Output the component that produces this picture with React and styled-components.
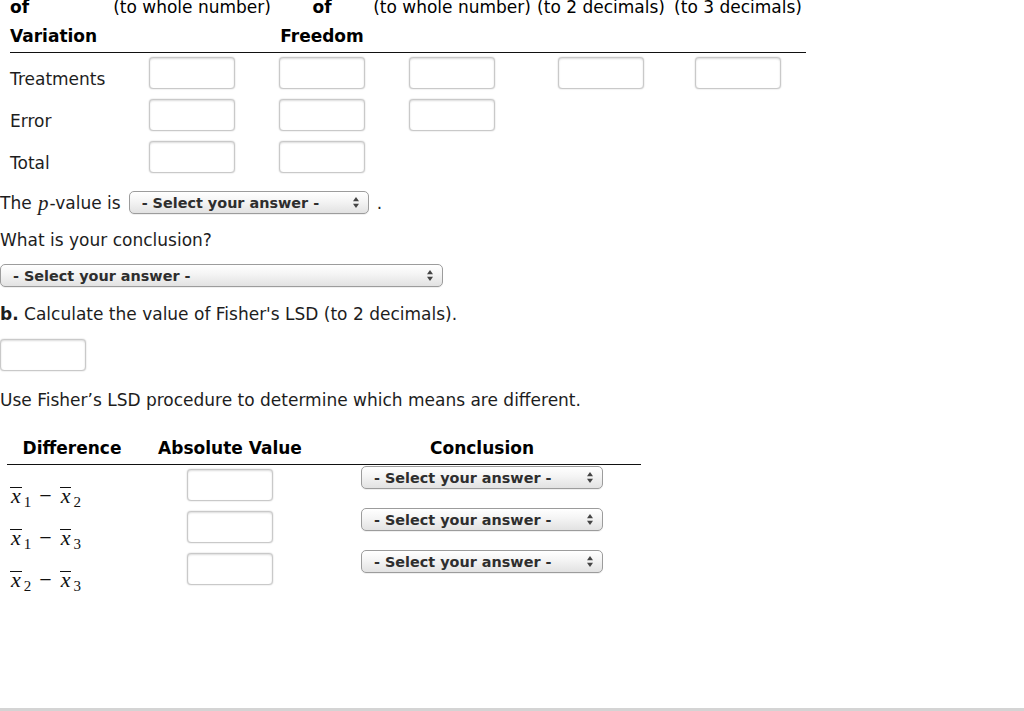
import React from 'react';
import styled, { createGlobalStyle } from 'styled-components';

const GlobalStyle = createGlobalStyle`
  html, body {
    margin: 0;
    padding: 0;
    background: #fff;
  }
  body {
    font-family: "DejaVu Sans", Verdana, sans-serif;
    color: #1d1d1d;
  }
`;

const Page = styled.div`
  height: 711px;
  box-sizing: border-box;
  overflow: hidden;
  border-bottom: 3px solid #d4d4d4;
  font-size: 17px;
`;

const Content = styled.div`
  margin-top: -36px;
  display: flex;
  flex-direction: column;
  align-items: flex-start;
`;

const AnovaTable = styled.div`
  margin-left: 10px;
  width: 796px;
  display: grid;
  grid-template-columns: 102px 160px 100px 160px 138px 136px;
  row-gap: 10px;
`;

const HeadCell = styled.div`
  display: flex;
  flex-direction: column;
  align-items: ${p => (p.left ? 'flex-start' : 'center')};
  line-height: 29px;
  height: 87px;
  padding-bottom: 1px;
  border-bottom: 1px solid #111;
  margin-bottom: -6px;
  white-space: nowrap;
  color: #000;
`;

const HeadLine = styled.span`
  font-weight: ${p => (p.bold ? 700 : 400)};
  height: 29px;
`;

const Label = styled.div`
  padding-top: 12px;
  line-height: 20px;
  white-space: nowrap;
`;

const Cell = styled.div`
  display: flex;
  justify-content: center;
  align-items: flex-start;
`;

const Input = styled.input`
  width: 86px;
  height: 32px;
  box-sizing: border-box;
  border: 1px solid #c9c9c9;
  border-radius: 4px;
  background: #fff;
  box-shadow: inset 0 1px 2px rgba(0, 0, 0, 0.14), 0 0 1.5px rgba(0, 0, 0, 0.25);
  padding: 0 6px;
  font: inherit;
  margin: ${p => p.m || 0};
`;

const Line = styled.div`
  line-height: 20px;
  margin-top: ${p => p.mt}px;
  white-space: nowrap;
`;

const PRow = styled.div`
  display: flex;
  align-items: center;
  height: 23px;
  margin-top: 18px;
  line-height: 20px;
`;

const MathVar = styled.span`
  font-family: "Liberation Serif", "Times New Roman", serif;
  font-style: italic;
  font-size: 21px;
  padding: 0 1px;
`;

const SelectWrap = styled.span`
  position: relative;
  display: flex;
  width: ${p => p.w}px;
  height: 23px;
  margin: ${p => p.m || 0};
`;

const Select = styled.select`
  appearance: none;
  -webkit-appearance: none;
  width: 100%;
  height: 23px;
  box-sizing: border-box;
  border: 1px solid #9c9c9c;
  border-radius: 5px;
  background: linear-gradient(to bottom, #ffffff 0%, #f4f4f4 45%, #e2e2e2 100%);
  box-shadow: 0 1px 0 rgba(0, 0, 0, 0.06);
  padding: 0 0 0 12px;
  font-family: "DejaVu Sans", Verdana, sans-serif;
  font-weight: 700;
  font-size: 14.4px;
  color: #2e2e2e;
`;

const Arrows = styled.svg`
  position: absolute;
  right: 10px;
  top: 6px;
  pointer-events: none;
`;

const Dot = styled.span`
  margin-left: 8px;
`;

const DiffTable = styled.div`
  margin-left: 7px;
  margin-top: 28px;
  width: 634px;
  display: grid;
  grid-template-columns: 130px 186px 318px;
  grid-template-rows: 28px repeat(3, 42px);
`;

const DiffHead = styled.div`
  text-align: center;
  font-weight: 700;
  color: #000;
  line-height: 20px;
  padding-bottom: 6px;
  border-bottom: 1px solid #111;
  align-self: start;
`;

const MathCell = styled.div`
  padding: 19px 0 0 3px;
  font-family: "Liberation Serif", "Times New Roman", serif;
  font-size: 22px;
  line-height: 22px;
  white-space: nowrap;
  color: #111;
`;

const Bar = styled.span`
  font-style: italic;
  display: inline-block;
  border-top: 1.2px solid #111;
  line-height: 16px;
  padding: 0 1px;
`;

const Sub = styled.sub`
  font-size: 15px;
  font-style: normal;
  vertical-align: -4px;
  line-height: 0;
  margin-left: 2px;
`;

const Minus = styled.span`
  margin: 0 8px;
`;

function ArrowIcon() {
  return (
    <Arrows width="6" height="11" viewBox="0 0 6 11">
      <path d="M3 0 L6 4.2 L0 4.2 Z" fill="#444" />
      <path d="M0 6.8 L6 6.8 L3 11 Z" fill="#444" />
    </Arrows>
  );
}

function Choice({ w, m }) {
  return (
    <SelectWrap w={w} m={m}>
      <Select defaultValue="">
        <option value="">- Select your answer -</option>
      </Select>
      <ArrowIcon />
    </SelectWrap>
  );
}

function Diff({ a, b }) {
  return (
    <MathCell>
      <Bar>x</Bar><Sub>{a}</Sub>
      <Minus>−</Minus>
      <Bar>x</Bar><Sub>{b}</Sub>
    </MathCell>
  );
}

const headers = [
  { left: true, lines: [['Source', true], ['of', true], ['Variation', true]] },
  { lines: [['Sum of Squares', true], ['(to whole number)', false], ['', false]] },
  { lines: [['Degrees', true], ['of', true], ['Freedom', true]] },
  { lines: [['Mean Square', true], ['(to whole number)', false], ['', false]] },
  { lines: [['F', true], ['(to 2 decimals)', false], ['', false]] },
  { lines: [['p-value', true], ['(to 3 decimals)', false], ['', false]] },
];

const rows = [
  { name: 'Treatments', inputs: 5 },
  { name: 'Error', inputs: 3 },
  { name: 'Total', inputs: 2 },
];

export default function App() {
  return (
    <Page>
      <GlobalStyle />
      <Content>
        <AnovaTable>
          {headers.map((h, i) => (
            <HeadCell key={i} left={h.left}>
              {h.lines.map(([t, bold], j) => (
                <HeadLine key={j} bold={bold}>{t}</HeadLine>
              ))}
            </HeadCell>
          ))}
          {rows.map(r => (
            <React.Fragment key={r.name}>
              <Label>{r.name}</Label>
              {[0, 1, 2, 3, 4].map(k => (
                <Cell key={k}>{k < r.inputs ? <Input type="text" /> : null}</Cell>
              ))}
            </React.Fragment>
          ))}
        </AnovaTable>

        <PRow>
          The&nbsp;<MathVar>p</MathVar>-value is
          <Choice w={240} m="0 0 0 8px" />
          <Dot>.</Dot>
        </PRow>

        <Line mt={16}>What is your conclusion?</Line>
        <Choice w={443} m="14px 0 0 0" />

        <Line mt={17}><b>b.</b> Calculate the value of Fisher's LSD (to 2 decimals).</Line>
        <Input type="text" m="15px 0 0 0" />

        <Line mt={19}>Use Fisher’s LSD procedure to determine which means are different.</Line>

        <DiffTable>
          <DiffHead>Difference</DiffHead>
          <DiffHead>Absolute Value</DiffHead>
          <DiffHead>Conclusion</DiffHead>
          {[['1', '2'], ['1', '3'], ['2', '3']].map(([a, b]) => (
            <React.Fragment key={a + b}>
              <Diff a={a} b={b} />
              <Cell><Input type="text" m="3px 0 0 0" /></Cell>
              <Cell><Choice w={242} /></Cell>
            </React.Fragment>
          ))}
        </DiffTable>
      </Content>
    </Page>
  );
}
